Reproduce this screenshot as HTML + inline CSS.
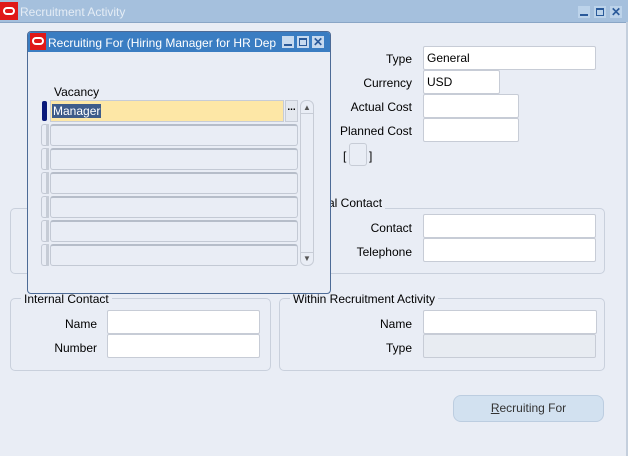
<!DOCTYPE html>
<html><head><style>
body{margin:0;width:628px;height:456px;background:#e9edf5;font-family:"Liberation Sans",sans-serif;font-size:12px;color:#000;position:relative;overflow:hidden}
.a{position:absolute}
.f{position:absolute;background:#fff;border:1px solid #c7ccd6;border-radius:2px;box-sizing:border-box;padding:0 3px;line-height:22px}
.l{position:absolute;text-align:right;width:120px}
.g{position:absolute;border:1px solid #c9d0dc;border-radius:5px;box-sizing:border-box}
.gl{position:absolute;background:#e9edf5;padding:0 3px}
.r{position:absolute;left:50px;width:248px;height:22px;border:1px solid #c3c9d4;border-top:2px solid #b6bdc9;border-radius:3px;box-sizing:border-box;background:#e9edf5}
.ri{position:absolute;left:41px;width:8px;height:22px;border:1px solid #c3c9d4;border-right:3px solid #c6ccd6;border-radius:3px 0 0 3px;box-sizing:border-box}
</style></head><body>
<div class="a" style="left:0;top:0;width:628px;height:22px;background:#a5c0dd;border-bottom:1px solid #8aa6c6"></div>
<div class="a" style="left:0;top:2px;width:18px;height:18px;background:#e01818"></div>
<div class="a" style="left:3px;top:7px;width:12px;height:8px;border:2px solid #fff;border-radius:6px;box-sizing:border-box"></div>
<div class="a" style="left:20px;top:5px;color:#e4ecf5;font-size:12px">Recruitment Activity</div>
<div class="a" style="left:578px;top:6px;width:12px;height:12px;background:#bcd3ea"><div class="a" style="left:2px;top:8px;width:8px;height:2px;background:#2a5a9a"></div></div>
<div class="a" style="left:594px;top:6px;width:12px;height:12px;background:#bcd3ea"><div class="a" style="left:2px;top:2px;width:8px;height:8px;border:1px solid #2a5a9a;border-top-width:2px;box-sizing:border-box"></div></div>
<div class="a" style="left:610px;top:6px;width:12px;height:12px;background:#bcd3ea;color:#2a5a9a;font-weight:bold;font-size:12px;line-height:12px;text-align:center">✕</div>
<div class="a" style="left:626px;top:22px;width:2px;height:434px;background:#c4cfdd"></div>

<div class="l" style="left:292px;top:52px">Type</div><div class="f" style="left:423px;top:46px;width:173px;height:24px">General</div>
<div class="l" style="left:292px;top:76px">Currency</div><div class="f" style="left:423px;top:70px;width:77px;height:24px">USD</div>
<div class="l" style="left:292px;top:100px">Actual Cost</div><div class="f" style="left:423px;top:94px;width:96px;height:24px"></div>
<div class="l" style="left:292px;top:124px">Planned Cost</div><div class="f" style="left:423px;top:118px;width:96px;height:24px"></div>
<div class="a" style="left:343px;top:149px">[</div><div class="a" style="left:349px;top:143px;width:18px;height:23px;border:1px solid #c7ccd6;border-radius:3px;box-sizing:border-box"></div><div class="a" style="left:369px;top:149px">]</div>

<div class="g" style="left:10px;top:208px;width:595px;height:66px"></div>
<div class="gl" style="left:325px;top:196px">al Contact</div>
<div class="l" style="left:292px;top:221px">Contact</div><div class="f" style="left:423px;top:214px;width:173px;height:24px"></div>
<div class="l" style="left:292px;top:245px">Telephone</div><div class="f" style="left:423px;top:238px;width:173px;height:24px"></div>

<div class="g" style="left:10px;top:298px;width:261px;height:73px"></div>
<div class="gl" style="left:21px;top:292px">Internal Contact</div>
<div class="l" style="left:-23px;top:317px">Name</div><div class="f" style="left:107px;top:310px;width:153px;height:24px"></div>
<div class="l" style="left:-23px;top:341px">Number</div><div class="f" style="left:107px;top:334px;width:153px;height:24px"></div>
<div class="g" style="left:279px;top:298px;width:326px;height:73px"></div>
<div class="gl" style="left:290px;top:292px">Within Recruitment Activity</div>
<div class="l" style="left:292px;top:317px">Name</div><div class="f" style="left:423px;top:310px;width:174px;height:24px"></div>
<div class="l" style="left:292px;top:341px">Type</div><div class="f" style="left:423px;top:334px;width:173px;height:24px;background:#e8ecf2"></div>

<div class="a" style="left:453px;top:395px;width:151px;height:27px;background:#d2e1f0;border:1px solid #bccde0;border-radius:8px;box-sizing:border-box;text-align:center;line-height:25px;color:#333"><u>R</u>ecruiting For</div>

<!-- inner window -->
<div class="a" style="left:27px;top:31px;width:304px;height:263px;background:#e9edf5;border:1px solid #4d6b96;border-radius:4px;box-sizing:border-box"></div>
<div class="a" style="left:28px;top:32px;width:302px;height:20px;background:#3a7dc2;border-radius:3px 3px 0 0"></div>
<div class="a" style="left:30px;top:33px;width:16px;height:17px;background:#e01818"></div>
<div class="a" style="left:32px;top:37px;width:12px;height:8px;border:2px solid #fff;border-radius:6px;box-sizing:border-box"></div>
<div class="a" style="left:48px;top:36px;color:#fff;white-space:nowrap">Recruiting For (Hiring Manager for HR Dep</div>
<div class="a" style="left:282px;top:36px;width:12px;height:12px;background:#c7daef"><div class="a" style="left:2px;top:8px;width:8px;height:2px;background:#2a5a9a"></div></div>
<div class="a" style="left:297px;top:36px;width:12px;height:12px;background:#c7daef"><div class="a" style="left:2px;top:2px;width:8px;height:8px;border:1px solid #2a5a9a;border-top-width:2px;box-sizing:border-box"></div></div>
<div class="a" style="left:312px;top:36px;width:12px;height:12px;background:#c7daef;color:#2a5a9a;font-weight:bold;line-height:12px;text-align:center">✕</div>

<div class="a" style="left:54px;top:85px">Vacancy</div>
<div class="a" style="left:42px;top:101px;width:5px;height:20px;background:#0a1a7a;border-radius:2px"></div>
<div class="a" style="left:50px;top:100px;width:234px;height:22px;background:#fde7a6;border:1px solid #c7ccd6;box-sizing:border-box"></div>
<div class="a" style="left:52px;top:104px;background:#3e5c8a;color:#fff;padding:0 1px">Manager</div>
<div class="a" style="left:285px;top:100px;width:13px;height:22px;background:#e4e8ef;border:1px solid #c7ccd6;box-sizing:border-box;text-align:center;font-weight:bold;line-height:14px;font-size:10px">...</div>

<div class="ri" style="top:124px"></div><div class="r" style="top:124px"></div>
<div class="ri" style="top:148px"></div><div class="r" style="top:148px"></div>
<div class="ri" style="top:172px"></div><div class="r" style="top:172px"></div>
<div class="ri" style="top:196px"></div><div class="r" style="top:196px"></div>
<div class="ri" style="top:220px"></div><div class="r" style="top:220px"></div>
<div class="ri" style="top:244px"></div><div class="r" style="top:244px"></div>
<div class="a" style="left:300px;top:100px;width:14px;height:166px;border:1px solid #c7ccd6;border-radius:6px;box-sizing:border-box"></div>
<div class="a" style="left:301px;top:113px;width:12px;height:1px;background:#c7ccd6"></div>
<div class="a" style="left:301px;top:252px;width:12px;height:1px;background:#c7ccd6"></div>
<div class="a" style="left:303px;top:103px;font-size:8px;color:#555">▲</div>
<div class="a" style="left:303px;top:254px;font-size:8px;color:#555">▼</div>
</body></html>
